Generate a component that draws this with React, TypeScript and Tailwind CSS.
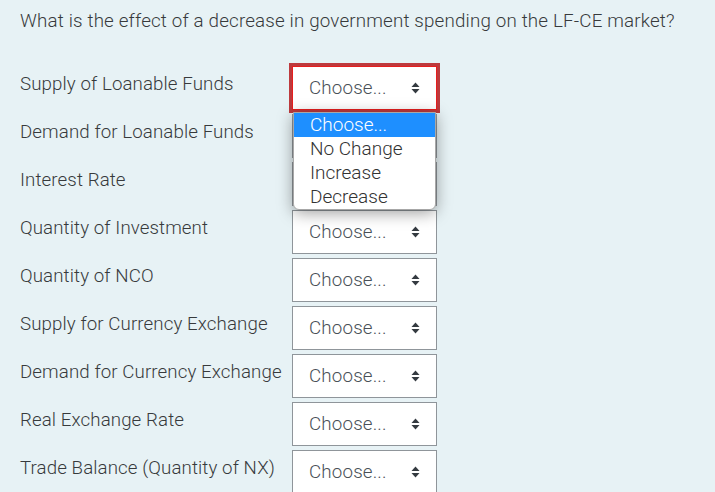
const rows = [
  'Supply of Loanable Funds',
  'Demand for Loanable Funds',
  'Interest Rate',
  'Quantity of Investment',
  'Quantity of NCO',
  'Supply for Currency Exchange',
  'Demand for Currency Exchange',
  'Real Exchange Rate',
  'Trade Balance (Quantity of NX)',
];

const options = ['Choose...', 'No Change', 'Increase', 'Decrease'];

function SortIcon() {
  return (
    <svg width="9" height="12" viewBox="0 0 9 12" className="shrink-0">
      <path d="M4.5 0.5 L8.5 5 H0.5 Z" fill="#343a40" />
      <path d="M4.5 11.5 L8.5 7 H0.5 Z" fill="#343a40" />
    </svg>
  );
}

function SelectBox({ focused }: { focused?: boolean }) {
  return (
    <div
      className={[
        'flex h-[44px] w-[145px] shrink-0 items-center justify-between bg-white pl-4 pr-[16px] text-[18.8px] font-light tracking-[0.15px] text-[#495057]',
        focused
          ? 'border border-[#e61e1e] shadow-[0_0_0_3px_#bd3a3d]'
          : 'border border-[#8f959a]',
      ].join(' ')}
    >
      <span>Choose...</span>
      <SortIcon />
    </div>
  );
}

export default function App() {
  return (
    <div
      className="min-h-[492px] w-full bg-[#e7f2f5] px-5 pt-[9px] font-light tracking-[0.1px] text-[#373a3c]"
      style={{ fontFamily: 'Roboto, "Liberation Sans", sans-serif' }}
    >
      <p className="text-[18.8px] leading-6 tracking-[0.16px]">
        What is the effect of a decrease in government spending on the LF-CE market?
      </p>

      <div className="relative mt-[33px] flex flex-col gap-1">
        {rows.map((label, i) => (
          <div key={label} className="flex items-start">
            <div className="w-[272px] shrink-0 pt-[6px] text-[18.7px] leading-6">{label}</div>
            <SelectBox focused={i === 0} />
          </div>
        ))}

        {/* Open native dropdown list of the first select */}
        <ul className="absolute left-[273px] top-[46px] w-[143px] overflow-hidden rounded-b-md border border-[#a7a7a7] bg-white text-[19px] leading-6 tracking-normal text-[#333] shadow-[0_3px_16px_rgba(0,0,0,0.38)]">
          {options.map((o, i) => (
            <li
              key={o}
              className={i === 0 ? 'bg-[#1e8fff] pl-4 text-white' : 'pl-4'}
            >
              {o}
            </li>
          ))}
        </ul>
      </div>
    </div>
  );
}
